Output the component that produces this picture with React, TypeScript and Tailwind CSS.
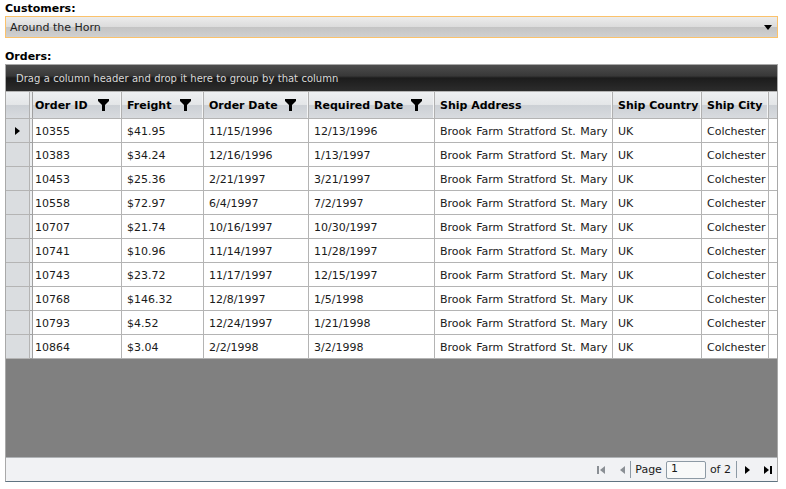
const font = "font-['DejaVu_Sans',Verdana,sans-serif]"
const cols = "grid grid-cols-[24px_3px_89px_82px_105px_126px_178px_89px_67px_1fr]"

const orders = [
  ["10355", "$41.95", "11/15/1996", "12/13/1996"],
  ["10383", "$34.24", "12/16/1996", "1/13/1997"],
  ["10453", "$25.36", "2/21/1997", "3/21/1997"],
  ["10558", "$72.97", "6/4/1997", "7/2/1997"],
  ["10707", "$21.74", "10/16/1997", "10/30/1997"],
  ["10741", "$10.96", "11/14/1997", "11/28/1997"],
  ["10743", "$23.72", "11/17/1997", "12/15/1997"],
  ["10768", "$146.32", "12/8/1997", "1/5/1998"],
  ["10793", "$4.52", "12/24/1997", "1/21/1998"],
  ["10864", "$3.04", "2/2/1998", "3/2/1998"],
]

function Funnel() {
  return (
    <svg width="11" height="12" viewBox="0 0 11 12" className="shrink-0">
      <path d="M0 0H11V2L7 6V12H4V6L0 2Z" fill="#000" />
    </svg>
  )
}

function HeaderCell({ label, filter, first }: { label: string; filter?: boolean; first?: boolean }) {
  return (
    <div className={`flex h-[26px] items-center justify-between border-r border-[#b0b0b0] bg-[linear-gradient(#eef0f2_0%,#e4e6e8_48%,#ccd0d5_52%,#d8dbdf_100%)] pr-[12px] shadow-[inset_-1px_0_0_#f4f5f6] ${first ? "pl-[2px]" : "pl-[5px]"}`}>
      <span className="whitespace-nowrap text-[11px] font-bold leading-none text-black">{label}</span>
      {filter && <Funnel />}
    </div>
  )
}

function Cell({ children, first }: { children: string; first?: boolean }) {
  return (
    <div className={`flex h-[24px] items-center overflow-hidden whitespace-nowrap border-r border-b border-[#b4b4b4] bg-white pt-[4px] text-[11px] text-[#1a1a1a] [word-spacing:1px] ${first ? "pl-[2px]" : "pl-[5px]"}`}>
      {children}
    </div>
  )
}

function PagerIcon({ d, color }: { d: string; color: string }) {
  return (
    <svg width="10" height="10" viewBox="0 0 10 10">
      <path d={d} fill={color} />
    </svg>
  )
}

export default function App() {
  return (
    <div className={`${font} h-[489px] w-[786px] overflow-hidden bg-white px-[5px] pt-[1px]`}>
      <div className="h-[15px] text-[11px] font-bold leading-[15px] text-black">Customers:</div>
      <div className="flex h-[22px] w-[773px] items-center justify-between border border-[#fbc26b] bg-[linear-gradient(#ececec_0%,#dcdcdc_48%,#c4c4c4_52%,#d0d0d0_100%)] pl-[4px] pr-[5px] text-[11px] text-[#222]">
        <span className="pt-[3px]">Around the Horn</span>
        <svg width="8" height="5" viewBox="0 0 8 5">
          <path d="M0 0H8L4 5Z" fill="#000" />
        </svg>
      </div>
      <div className="mt-[11px] h-[15px] text-[11px] font-bold leading-[15px] text-black">Orders:</div>

      <div className="flex h-[418px] w-[773px] flex-col border border-[#a9a9a9] border-b-[#5f7482]">
        <div className="flex h-[26px] shrink-0 items-center bg-[linear-gradient(#4d4d4d_0%,#383838_42%,#1c1c1c_50%,#2c2c2c_100%)] pl-[10px] pt-[1px] text-[10px] text-[#d8d8d8] [word-spacing:0.2px]">
          Drag a column header and drop it here to group by that column
        </div>

        <div className={`${cols} border-t border-b border-[#b4b4b4]`}>
          <div className="h-[26px] border-r border-[#b0b0b0] bg-[linear-gradient(#eef0f2_0%,#e4e6e8_48%,#ccd0d5_52%,#d8dbdf_100%)]" />
          <div className="h-[26px] border-r border-[#a0a0a0] bg-[#e8eaec]" />
          <HeaderCell label="Order ID" filter first />
          <HeaderCell label="Freight" filter />
          <HeaderCell label="Order Date" filter />
          <HeaderCell label="Required Date" filter />
          <HeaderCell label="Ship Address" />
          <HeaderCell label="Ship Country" />
          <HeaderCell label="Ship City" />
          <div className="h-[26px] bg-[linear-gradient(#eef0f2_0%,#e4e6e8_48%,#ccd0d5_52%,#d8dbdf_100%)]" />
        </div>

        {orders.map((o, i) => (
          <div key={o[0]} className={cols}>
            <div className="flex h-[24px] items-center justify-center border-r border-b border-[#b4b4b4] bg-[#dadde0]">
              {i === 0 && (
                <svg width="5" height="8" viewBox="0 0 5 8">
                  <path d="M0 0L5 4L0 8Z" fill="#000" />
                </svg>
              )}
            </div>
            <div className="h-[24px] border-r border-b border-[#a0a0a0] bg-[#eceef0]" />
            <Cell first>{o[0]}</Cell>
            <Cell>{o[1]}</Cell>
            <Cell>{o[2]}</Cell>
            <Cell>{o[3]}</Cell>
            <Cell>Brook Farm Stratford St. Mary</Cell>
            <Cell>UK</Cell>
            <Cell>Colchester</Cell>
            <div className="h-[24px] border-b border-[#b4b4b4] bg-white" />
          </div>
        ))}

        <div className="min-h-0 flex-1 bg-[#808080]" />

        <div className="flex h-[24px] shrink-0 items-center justify-end rounded-b-[2px] border-t border-[#b0b3b6] bg-[#f1f2f4] pr-[4px] text-[11px] text-[#1a1a1a]">
          <div className="flex items-center gap-[11px]">
            <PagerIcon d="M1 1H3V9H1ZM9 1V9L4 5Z" color="#8a8f94" />
            <PagerIcon d="M8 1V9L3 5Z" color="#8a8f94" />
          </div>
          <div className="ml-[3px] h-[17px] w-px bg-[#8d9aa5]" />
          <span className="ml-[4px] pt-[1px]">Page</span>
          <div className="ml-[4px] flex h-[18px] w-[40px] items-center rounded-[2px] border border-[#8d9aa5] bg-[#f8f9f9] pl-[4px] text-[11px]">
            1
          </div>
          <span className="ml-[4px] pt-[1px]">of 2</span>
          <div className="ml-[5px] h-[17px] w-px bg-[#8d9aa5]" />
          <div className="ml-[6px] flex items-center gap-[10px]">
            <PagerIcon d="M2 1L7 5L2 9Z" color="#000" />
            <PagerIcon d="M1 1L6 5L1 9ZM7 1H9V9H7Z" color="#000" />
          </div>
        </div>
      </div>
    </div>
  )
}
